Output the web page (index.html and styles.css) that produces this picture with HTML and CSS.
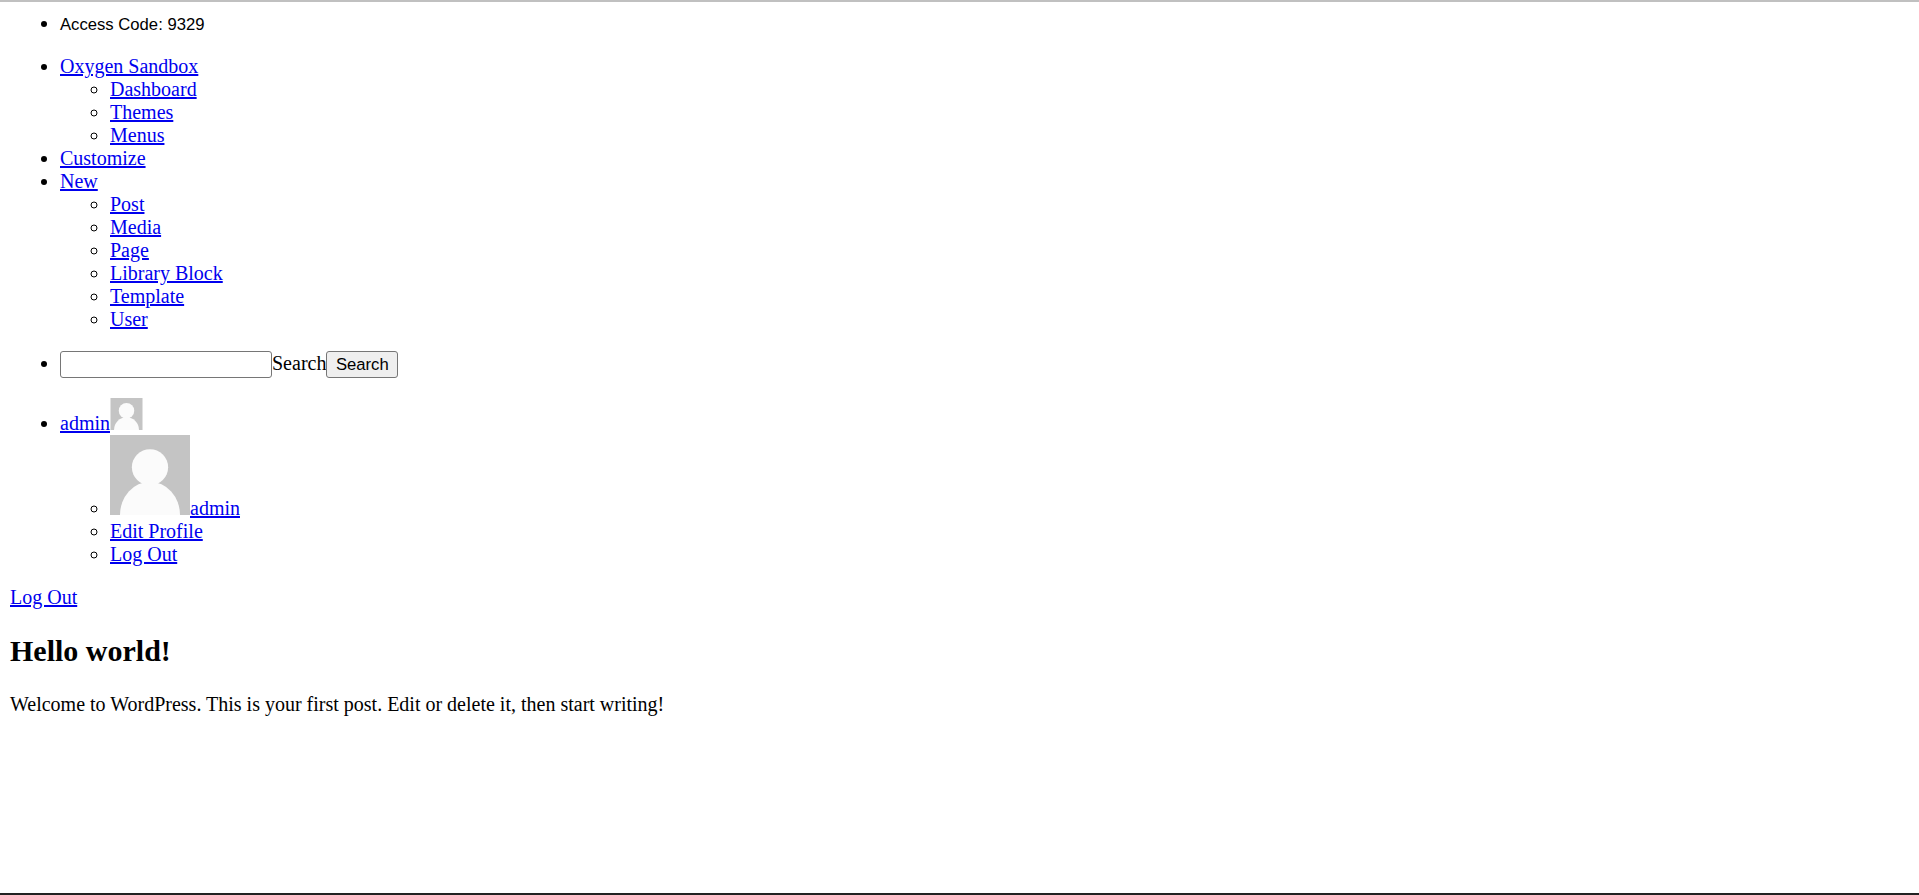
FILE: index.html
```html
<!DOCTYPE html>
<html lang="en">
<head>
<meta charset="utf-8">
<title>Hello world!</title>
<link rel="stylesheet" href="styles.css">
</head>
<body>
<div class="frame">
  <main class="content">
    <ul class="list code-list"><li><span class="code-text">Access Code: 9329</span></li></ul>
    <ul class="list">
      <li><a href="#">Oxygen Sandbox</a>
        <ul class="sub">
          <li><a href="#">Dashboard</a></li>
          <li><a href="#">Themes</a></li>
          <li><a href="#">Menus</a></li>
        </ul>
      </li>
      <li><a href="#">Customize</a></li>
      <li><a href="#">New</a>
        <ul class="sub">
          <li><a href="#">Post</a></li>
          <li><a href="#">Media</a></li>
          <li><a href="#">Page</a></li>
          <li><a href="#">Library Block</a></li>
          <li><a href="#">Template</a></li>
          <li><a href="#">User</a></li>
        </ul>
      </li>
    </ul>
    <ul class="list">
      <li><form class="search"><input class="search-input" type="text" aria-label="Search"><label>Search</label><button class="search-button" type="button">Search</button></form></li>
    </ul>
    <ul class="list">
      <li><a href="#">admin</a><svg class="avatar avatar-small" viewBox="0 0 64 64" aria-hidden="true"><rect width="64" height="64" fill="#c4c4c4"/><circle cx="32" cy="25.4" r="15.5" fill="#fbfbfb"/><ellipse cx="32" cy="64" rx="25" ry="25.4" fill="#fbfbfb"/></svg>
        <ul class="sub">
          <li><svg class="avatar avatar-large" viewBox="0 0 64 64" aria-hidden="true"><rect width="64" height="64" fill="#c4c4c4"/><circle cx="32" cy="25.8" r="14.5" fill="#fbfbfb"/><ellipse cx="32" cy="64" rx="24" ry="26.6" fill="#fbfbfb"/></svg><a href="#">admin</a></li>
          <li><a href="#">Edit Profile</a></li>
          <li><a href="#">Log Out</a></li>
        </ul>
      </li>
    </ul>
    <a href="#">Log Out</a>
    <h2 class="post-title">Hello world!</h2>
    <p class="post-text">Welcome to WordPress. This is your first post. Edit or delete it, then start writing!</p>
  </main>
</div>
</body>
</html>
```
FILE: styles.css
```css
html, body {
  margin: 0;
  height: 100%;
  background: #fff;
}
body {
  overflow: hidden;
  font-family: "Liberation Serif", serif;
  font-size: 20px;
  color: #000;
}
.frame {
  box-sizing: border-box;
  height: 895px;
  display: flex;
  flex-direction: column;
  border-top: 2px solid #c0c0c0;
  border-bottom: 2px solid #222;
}
.content {
  flex: 1;
  overflow: hidden;
  padding: 0 10px;
}
a {
  color: #00e;
  text-decoration: underline;
  text-decoration-thickness: 2px;
}
.list {
  margin: 20px 0;
  padding-left: 50px;
  list-style: disc;
}
.code-list {
  margin: 10px 0 19px;
}
.code-text {
  font-family: "Liberation Sans", Arial, sans-serif;
  font-size: 16.67px;
}
.sub {
  margin: 0;
  padding-left: 50px;
  list-style: circle;
}
.search-input {
  box-sizing: border-box;
  width: 212px;
  height: 27px;
  padding: 1px 2.5px;
  border: 1px solid #767676;
  border-radius: 3px;
  background: #fff;
  font-family: "Liberation Sans", Arial, sans-serif;
  font-size: 16.67px;
}
.search-button {
  box-sizing: border-box;
  height: 27px;
  padding: 1px 8.5px;
  border: 1px solid #767676;
  border-radius: 3px;
  background: #efefef;
  color: #000;
  font-family: "Liberation Sans", Arial, sans-serif;
  font-size: 16.67px;
}
.avatar {
  display: inline-block;
  vertical-align: baseline;
}
.avatar-small {
  width: 33px;
  height: 32px;
}
.avatar-large {
  width: 80px;
  height: 80px;
}
.post-title {
  margin: 25px 0;
  font-size: 30px;
  font-weight: bold;
}
.post-text {
  margin: 20px 0;
}
```
